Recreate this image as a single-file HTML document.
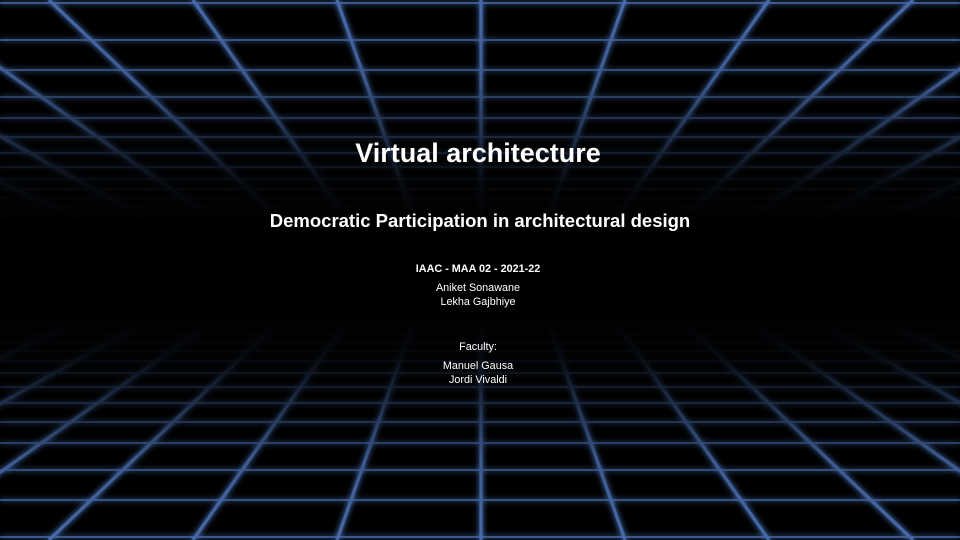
<!DOCTYPE html>
<html><head><meta charset="utf-8">
<style>
html,body{margin:0;padding:0;background:#000;}
body{width:960px;height:540px;position:relative;overflow:hidden;font-family:"Liberation Sans",Arial,sans-serif;color:#fff;}
svg{position:absolute;left:0;top:0;}
.t{position:absolute;left:0;width:956px;text-align:center;white-space:nowrap;}
</style></head><body>
<svg width="960" height="540" viewBox="0 0 960 540">
<defs>
<filter id="glow" x="-20%" y="-20%" width="140%" height="140%">
<feGaussianBlur in="SourceGraphic" stdDeviation="3" result="b"/>
<feColorMatrix in="b" type="matrix" values="0 0 0 0 0.1  0 0 0 0 0.3  0 0 0 0 0.9  0 0 0 1.0 0" result="c"/>
<feMerge><feMergeNode in="c"/><feMergeNode in="SourceGraphic"/></feMerge>
</filter>
<linearGradient id="gt" gradientUnits="userSpaceOnUse" x1="0" y1="0" x2="0" y2="225">
<stop offset="0" stop-color="#fff" stop-opacity="1"/>
<stop offset="0.35" stop-color="#fff" stop-opacity="0.85"/>
<stop offset="0.6" stop-color="#fff" stop-opacity="0.45"/>
<stop offset="0.82" stop-color="#fff" stop-opacity="0.1"/>
<stop offset="1" stop-color="#fff" stop-opacity="0"/>
</linearGradient>
<linearGradient id="gb" gradientUnits="userSpaceOnUse" x1="0" y1="540" x2="0" y2="315">
<stop offset="0" stop-color="#fff" stop-opacity="1"/>
<stop offset="0.35" stop-color="#fff" stop-opacity="0.85"/>
<stop offset="0.6" stop-color="#fff" stop-opacity="0.45"/>
<stop offset="0.82" stop-color="#fff" stop-opacity="0.1"/>
<stop offset="1" stop-color="#fff" stop-opacity="0"/>
</linearGradient>
<mask id="mt" maskUnits="userSpaceOnUse" x="0" y="0" width="960" height="540"><rect x="0" y="0" width="960" height="270" fill="url(#gt)"/></mask>
<mask id="mb" maskUnits="userSpaceOnUse" x="0" y="0" width="960" height="540"><rect x="0" y="270" width="960" height="270" fill="url(#gb)"/></mask>
</defs>
<g mask="url(#mt)"><g filter="url(#glow)" stroke="#4a6aa8" fill="none">
<g stroke-width="3.2">
<path d="M-671 0L481 410M-527 0L481 410M-383 0L481 410M-239 0L481 410M-95 0L481 410M49 0L481 410M193 0L481 410M337 0L481 410M481 0L481 410M625 0L481 410M769 0L481 410M913 0L481 410M1057 0L481 410M1201 0L481 410M1345 0L481 410M1489 0L481 410M1633 0L481 410"/>
</g>
<g stroke-width="1.6">
<path d="M0 3H960M0 40H960M0 70H960M0 97H960M0 118H960M0 137H960M0 153H960M0 167H960"/>
</g>
<g stroke-width="1.2">
<path d="M0 179H960M0 189H960M0 198H960M0 206H960M0 213H960M0 219H960"/>
</g>
</g></g>
<g mask="url(#mb)"><g filter="url(#glow)" stroke="#4a6aa8" fill="none">
<g stroke-width="3.2">
<path d="M-671 540L481 130M-527 540L481 130M-383 540L481 130M-239 540L481 130M-95 540L481 130M49 540L481 130M193 540L481 130M337 540L481 130M481 540L481 130M625 540L481 130M769 540L481 130M913 540L481 130M1057 540L481 130M1201 540L481 130M1345 540L481 130M1489 540L481 130M1633 540L481 130"/>
</g>
<g stroke-width="1.6">
<path d="M0 537H960M0 500H960M0 470H960M0 443H960M0 422H960M0 403H960M0 387H960M0 373H960"/>
</g>
<g stroke-width="1.2">
<path d="M0 361H960M0 351H960M0 342H960M0 334H960M0 327H960M0 321H960"/>
</g>
</g></g>
</svg>
<div class="t" style="top:138px;font-size:27px;font-weight:bold;">Virtual architecture</div>
<div class="t" style="top:210px;font-size:18.5px;font-weight:bold;left:2px;">Democratic Participation in architectural design</div>
<div class="t" style="top:263px;font-size:10.8px;font-weight:bold;">IAAC - MAA 02 - 2021-22</div>
<div class="t" style="top:282px;font-size:10.8px;">Aniket Sonawane</div>
<div class="t" style="top:296px;font-size:10.8px;">Lekha Gajbhiye</div>
<div class="t" style="top:341px;font-size:10.8px;">Faculty:</div>
<div class="t" style="top:360px;font-size:10.8px;">Manuel Gausa</div>
<div class="t" style="top:374px;font-size:10.8px;">Jordi Vivaldi</div>
</body></html>
